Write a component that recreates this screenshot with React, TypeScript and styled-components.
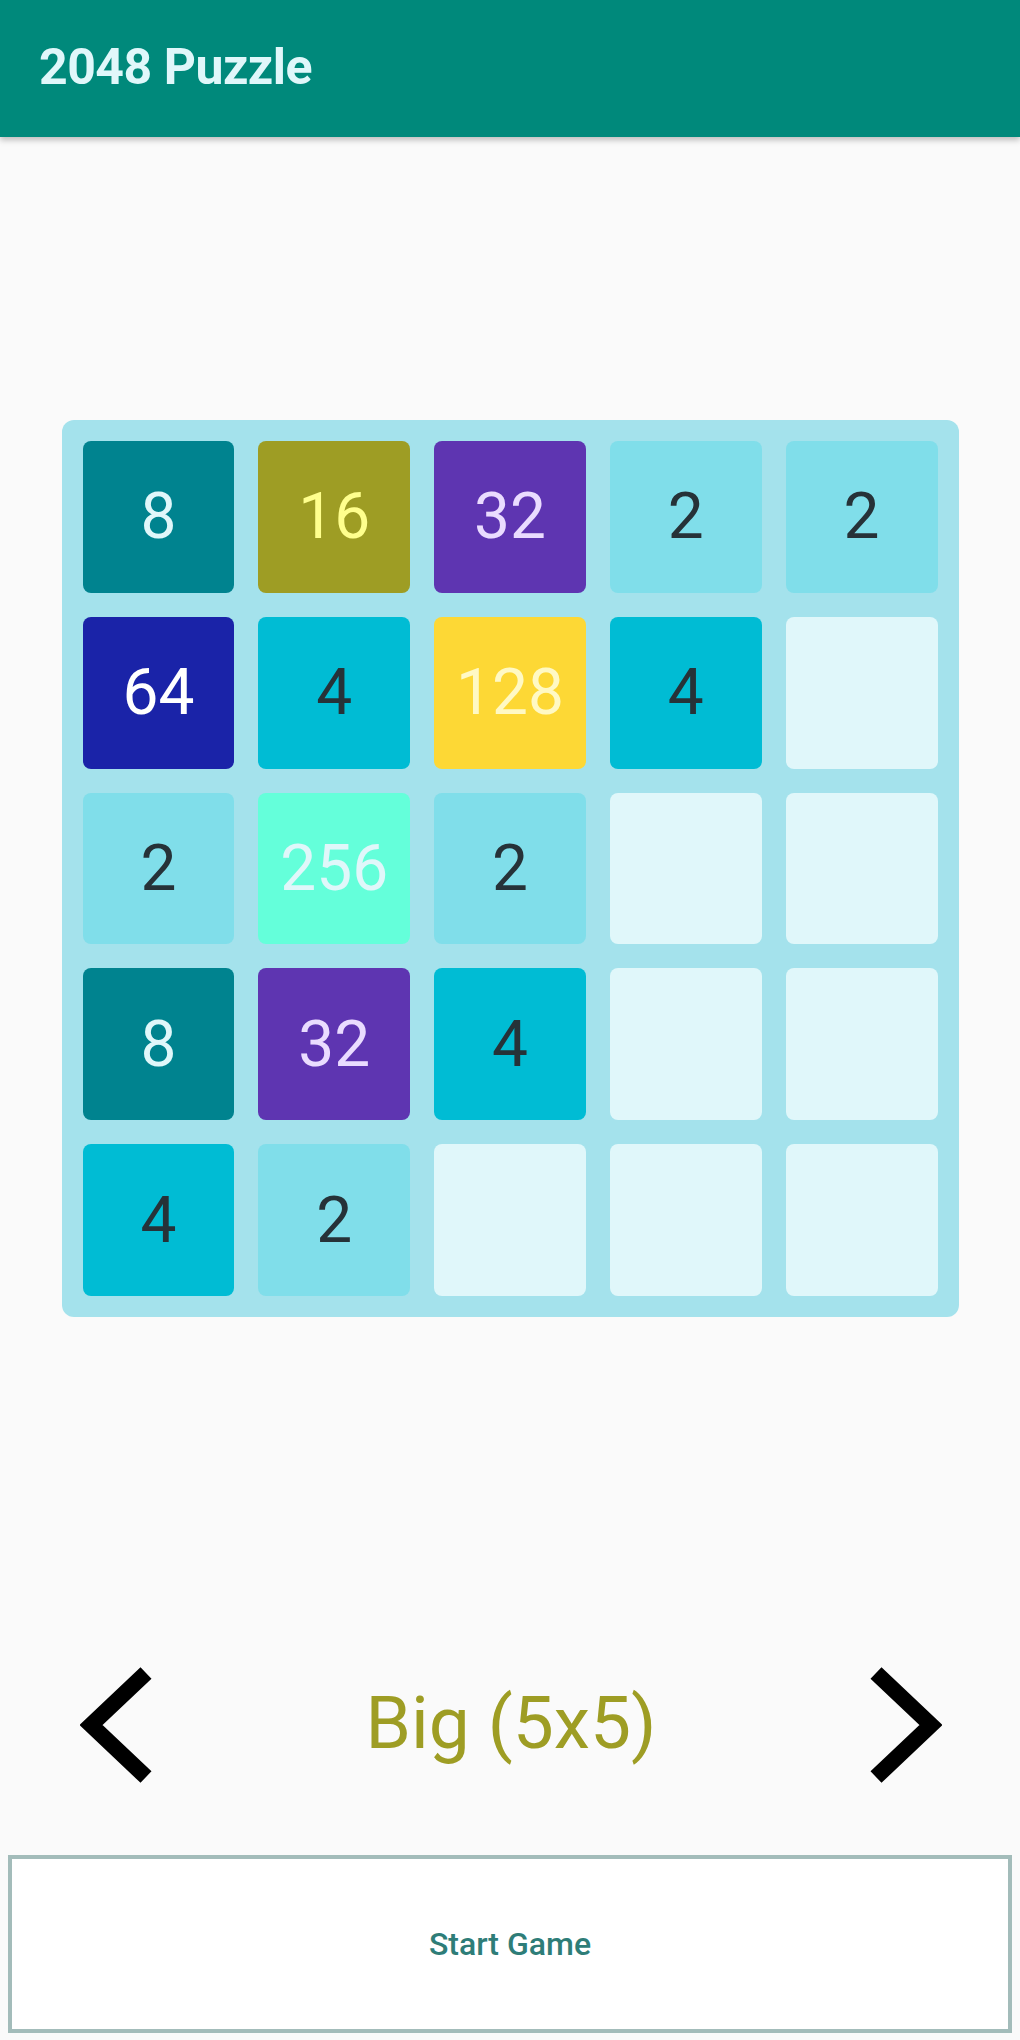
import React from "react";
import styled, { createGlobalStyle } from "styled-components";

const GlobalStyle = createGlobalStyle`
  html, body {
    margin: 0;
    padding: 0;
    background: #fafafa;
  }
  body {
    font-family: Roboto, "Noto Sans", "Liberation Sans", sans-serif;
  }
`;

const Screen = styled.div`
  display: flex;
  flex-direction: column;
  width: 1020px;
  height: 2040px;
  background: #fafafa;
  overflow: hidden;
`;

const AppBar = styled.header`
  height: 137px;
  flex: none;
  display: flex;
  align-items: center;
  padding: 0 39px;
  background: #00897b;
  box-shadow: 0 3px 6px rgba(0, 0, 0, 0.25);
  position: relative;
  z-index: 1;
`;

const Title = styled.h1`
  margin: 0 0 4px 0;
  font-size: 50px;
  font-weight: 700;
  color: #e0f7fa;
  letter-spacing: -0.5px;
`;

const BoardArea = styled.main`
  flex: 1;
  display: flex;
  align-items: center;
  justify-content: center;
`;

const Board = styled.div`
  width: 897px;
  height: 897px;
  box-sizing: border-box;
  padding: 21px;
  display: grid;
  grid-template-columns: repeat(5, 1fr);
  grid-template-rows: repeat(5, 1fr);
  gap: 24px;
  background: #a4e2ec;
  border-radius: 12px;
`;

type Palette = { bg: string; fg: string };

const palette: Record<number, Palette> = {
  0: { bg: "#e0f7fa", fg: "transparent" },
  2: { bg: "#80deea", fg: "#263238" },
  4: { bg: "#00bcd4", fg: "#263238" },
  8: { bg: "#00838f", fg: "#e0f7fa" },
  16: { bg: "#9e9d24", fg: "#ffff8d" },
  32: { bg: "#5e35b1", fg: "#eadcff" },
  64: { bg: "#1a23a8", fg: "#ffffff" },
  128: { bg: "#fdd835", fg: "#fff9c4" },
  256: { bg: "#64ffda", fg: "#e0f7fa" },
};

const Tile = styled.div<{ $bg: string; $fg: string }>`
  display: flex;
  align-items: center;
  justify-content: center;
  border-radius: 8px;
  background: ${(p) => p.$bg};
  color: ${(p) => p.$fg};
  font-size: 64px;
  font-weight: 400;
`;

const Selector = styled.div`
  height: 250px;
  flex: none;
  display: flex;
  align-items: center;
  justify-content: space-between;
  padding: 0 78px 0 80px;
`;

const ArrowButton = styled.button`
  width: 76px;
  height: 120px;
  padding: 0;
  border: none;
  background: none;
  display: flex;
  align-items: center;
  justify-content: center;
  cursor: pointer;
`;

const SizeLabel = styled.div`
  font-size: 73px;
  font-weight: 400;
  color: #9e9d24;
  margin-top: -4px;
`;

const StartButton = styled.button`
  flex: none;
  height: 178px;
  margin: 5px 8px 7px;
  border: 4px solid #a3bcba;
  background: #ffffff;
  font-family: Roboto, "Noto Sans", "Liberation Sans", sans-serif;
  font-size: 32px;
  font-weight: 500;
  color: #2e7d78;
  cursor: pointer;
`;

const Chevron: React.FC<{ dir: "left" | "right" }> = ({ dir }) => (
  <svg width="76" height="120" viewBox="0 0 76 120">
    <polyline
      points={dir === "left" ? "66,8 11,60 66,112" : "10,8 65,60 10,112"}
      fill="none"
      stroke="#000"
      strokeWidth="16"
      strokeLinecap="butt"
      strokeLinejoin="miter"
    />
  </svg>
);

const grid = [
  [8, 16, 32, 2, 2],
  [64, 4, 128, 4, 0],
  [2, 256, 2, 0, 0],
  [8, 32, 4, 0, 0],
  [4, 2, 0, 0, 0],
];

const App: React.FC = () => {
  return (
    <>
      <GlobalStyle />
      <Screen>
        <AppBar>
          <Title>2048 Puzzle</Title>
        </AppBar>

        <BoardArea>
          <Board>
            {grid.flat().map((value, i) => {
              const colors = palette[value];
              return (
                <Tile key={i} $bg={colors.bg} $fg={colors.fg}>
                  {value > 0 ? value : ""}
                </Tile>
              );
            })}
          </Board>
        </BoardArea>

        <Selector>
          <ArrowButton aria-label="Previous size">
            <Chevron dir="left" />
          </ArrowButton>
          <SizeLabel>Big (5x5)</SizeLabel>
          <ArrowButton aria-label="Next size">
            <Chevron dir="right" />
          </ArrowButton>
        </Selector>

        <StartButton>Start Game</StartButton>
      </Screen>
    </>
  );
};

export default App;
